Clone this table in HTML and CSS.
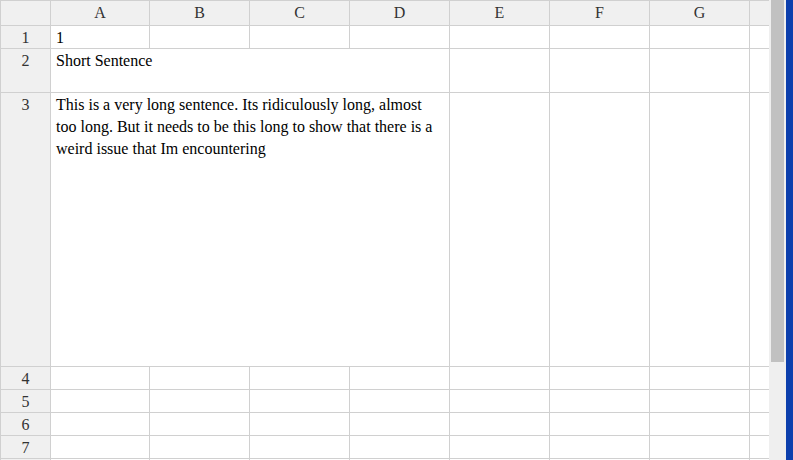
FILE: index.html
```html
<!DOCTYPE html>
<html>
<head>
<meta charset="utf-8">
<link rel="stylesheet" href="styles.css">
</head>
<body>
<div class="page">
  <div class="sheet-view">
    <div class="sheet">
      <div class="hd corner"></div>
      <div class="hd col">A</div>
      <div class="hd col">B</div>
      <div class="hd col">C</div>
      <div class="hd col">D</div>
      <div class="hd col">E</div>
      <div class="hd col">F</div>
      <div class="hd col">G</div>
      <div class="hd col"></div>

      <div class="hd rowh">1</div>
      <div class="cell">1</div>
      <div class="cell"></div><div class="cell"></div><div class="cell"></div>
      <div class="cell"></div><div class="cell"></div><div class="cell"></div><div class="cell"></div>

      <div class="hd rowh">2</div>
      <div class="cell span4">Short Sentence</div>
      <div class="cell"></div><div class="cell"></div><div class="cell"></div><div class="cell"></div>

      <div class="hd rowh">3</div>
      <div class="cell span4">This is a very long sentence. Its ridiculously long, almost too long. But it needs to be this long to show that there is a weird issue that Im encountering</div>
      <div class="cell"></div><div class="cell"></div><div class="cell"></div><div class="cell"></div>

      <div class="hd rowh">4</div>
      <div class="cell"></div><div class="cell"></div><div class="cell"></div><div class="cell"></div>
      <div class="cell"></div><div class="cell"></div><div class="cell"></div><div class="cell"></div>

      <div class="hd rowh">5</div>
      <div class="cell"></div><div class="cell"></div><div class="cell"></div><div class="cell"></div>
      <div class="cell"></div><div class="cell"></div><div class="cell"></div><div class="cell"></div>

      <div class="hd rowh">6</div>
      <div class="cell"></div><div class="cell"></div><div class="cell"></div><div class="cell"></div>
      <div class="cell"></div><div class="cell"></div><div class="cell"></div><div class="cell"></div>

      <div class="hd rowh">7</div>
      <div class="cell"></div><div class="cell"></div><div class="cell"></div><div class="cell"></div>
      <div class="cell"></div><div class="cell"></div><div class="cell"></div><div class="cell"></div>

      <div class="hd rowh"></div>
      <div class="cell"></div><div class="cell"></div><div class="cell"></div><div class="cell"></div>
      <div class="cell"></div><div class="cell"></div><div class="cell"></div><div class="cell"></div>
    </div>
  </div>
  <div class="scrollbar"><div class="thumb"></div></div>
  <div class="edge"></div>
</div>
</body>
</html>
```

FILE: styles.css
```css
html, body {
  margin: 0;
  padding: 0;
  background: #ffffff;
}
.page {
  display: flex;
  width: 793px;
  height: 460px;
  overflow: hidden;
}
.sheet-view {
  width: 769px;
  height: 460px;
  overflow: hidden;
  flex: none;
}
.sheet {
  display: grid;
  grid-template-columns: 49px 98px 99px 99px 99px 99px 99px 99px 99px;
  grid-template-rows: 24px 22px 43px 273px 22px 22px 22px 22px 22px;
  gap: 1px;
  padding: 1px 0 0 1px;
  background: #d0d0d0;
  width: max-content;
  font-family: "Liberation Serif", "Times New Roman", serif;
  font-size: 16px;
  line-height: 22px;
  color: #000;
}
.hd {
  background: #f0f0f0;
  color: #333;
  text-align: center;
}
.col {
  line-height: 24px;
}
.rowh {
  line-height: 22px;
  padding-top: 1px;
}
.cell {
  background: #fff;
  padding: 1px 5px 0;
  overflow: hidden;
}
.span4 {
  grid-column: span 4;
}
.scrollbar {
  width: 17px;
  height: 460px;
  background: #efefef;
  flex: none;
  box-sizing: border-box;
  padding: 0 2px 0 2px;
}
.thumb {
  height: 362px;
  background: #c1c1c1;
}
.edge {
  flex: 1;
  background: #0c3fad;
}
```
